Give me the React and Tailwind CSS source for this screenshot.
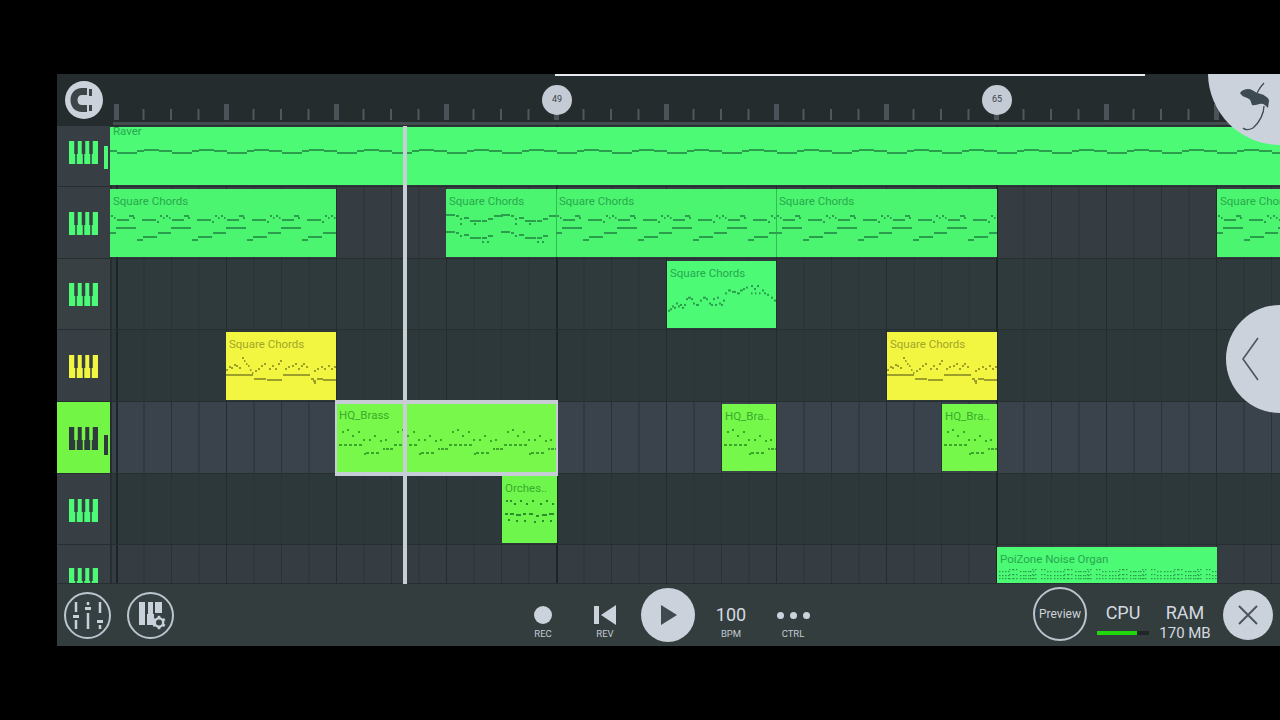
const FONT = "font-['Roboto','Liberation_Sans',sans-serif]";

function Piano({ color, bg, className = "" }) {
  return (
    <svg width="29" height="23" viewBox="0 0 29 23" className={className}>
      <rect x="0" y="0" width="29" height="23" fill={color} />
      {[6.5, 14, 21.5].map((x) => (
        <g key={x}>
          <rect x={x - 1.25} y="0" width="3.5" height="13" fill={bg} />
          <rect x={x - 0.25} y="13" width="1.5" height="10" fill={bg} />
        </g>
      ))}
    </svg>
  );
}

function Notes({ notes, period, width, height, color, dy = 0 }) {
  const rects = [];
  if (period) {
    const count = Math.ceil(width / period) + 1;
    for (let i = 0; i < count; i++) {
      notes.forEach((n, j) => {
        rects.push(<rect key={i + "-" + j} x={n[0] + i * period} y={n[1] + dy} width={n[2]} height={n[3] || 2} fill={color} />);
      });
    }
  } else {
    notes.forEach((n, j) => {
      rects.push(<rect key={j} x={n[0]} y={n[1] + dy} width={n[2]} height={n[3] || 2} fill={color} />);
    });
  }
  return (
    <svg width={width} height={height} className="absolute left-0 top-0 pointer-events-none">
      {rects}
    </svg>
  );
}

const chordA = [
  [1, 26, 2], [4, 28, 1.5], [19, 26, 5], [7, 30, 12], [32, 30, 14], [23, 28, 2], [47, 32, 2], [50, 26, 2], [53, 28, 1.5],
  [6, 38, 20], [0, 43, 6], [48, 43, 7], [27, 50, 6], [33, 47, 14],
];
const chordB = [
  [0, 25, 9], [10, 26, 3], [14, 29, 2], [18, 28, 5], [24, 31, 11], [36, 31, 5], [42, 29, 5], [48, 26, 9],
  [0, 42, 9], [10, 43, 3], [14, 46, 2], [18, 45, 5], [24, 48, 11], [36, 48, 5], [42, 46, 5], [36, 52, 2], [41, 52, 2], [14, 34, 2], [28, 34, 2],
];
const raver = [
  [0, 23, 7], [7, 25, 20], [27, 23, 7], [34, 22, 15], [49, 23, 6],
];
const climb = [
  [1, 46, 2], [3, 45, 2], [5, 43, 2], [7, 44, 2], [9, 41, 2], [11, 43, 2], [13, 42, 2], [15, 44, 2], [17, 42, 2], [19, 38, 2], [21, 37, 3], [24, 38, 2], [26, 41, 2], [29, 42, 3], [33, 39, 2], [36, 37, 3], [39, 38, 2], [42, 41, 2], [44, 42, 2], [46, 38, 2], [48, 42, 2], [50, 37, 2], [52, 41, 2], [54, 42, 2], [56, 39, 2], [58, 34, 2], [61, 32, 3], [65, 33, 4], [70, 34, 3], [73, 32, 3], [76, 31, 2], [79, 30, 2], [84, 29, 2], [87, 31, 2], [90, 29, 2], [95, 32, 2], [97, 34, 2], [100, 35, 2], [104, 37, 2], [107, 39, 2], [84, 34, 1.5], [88, 34, 1.5], [92, 34, 1.5],
].map(([x, y, w]) => [x, 27 + (y - 31) * 1.45, w]);
const yellow = [
  [0, 37, 2], [3, 34, 2], [5, 35, 2], [8, 32, 2], [10, 33, 2], [13, 35, 2], [16, 25, 2], [18, 28, 1.5], [20, 31, 1.5], [22, 33, 1.5], [24, 37, 1.5], [26, 40, 1.5], [29, 38, 2], [32, 36, 2], [35, 33, 2], [38, 31, 2], [43, 36, 2], [46, 33, 2], [49, 36, 2], [52, 31, 2], [54, 28, 2], [59, 36, 2], [62, 34, 2], [66, 33, 2], [69, 31, 2], [72, 36, 2], [75, 33, 2], [77, 31, 2], [80, 34, 2], [88, 38, 2], [91, 36, 2], [95, 34, 2], [98, 36, 2], [102, 33, 2], [105, 36, 2], [108, 34, 2],
  [0, 42, 27], [28, 46, 12], [41, 47, 15], [57, 42, 27], [85, 46, 3], [87, 48, 3], [88, 50, 2], [91, 46, 6], [97, 47, 13],
];
const brass = [
  [5, 27, 2], [10, 25, 2], [15, 31, 2], [21, 27, 2], [26, 35, 2], [32, 35, 2], [37, 31, 2], [43, 36, 2], [48, 35, 2],
  [2, 40, 3], [7, 40, 3], [12, 40, 3], [17, 40, 3], [22, 40, 3], [27, 49, 2], [29, 48, 3], [34, 48, 3], [39, 48, 3], [46, 44, 2], [49, 44, 3], [53, 44, 3],
];
const orches = [
  [4, 24, 2], [8, 24, 2], [12, 27, 2], [18, 24, 2], [24, 27, 2], [30, 24, 2], [38, 27, 2], [44, 24, 2], [50, 27, 2],
  [3, 37, 3], [8, 37, 4], [14, 38, 5], [21, 37, 3], [27, 37, 4], [34, 39, 3], [40, 38, 5], [47, 37, 5],
  [6, 43, 2], [14, 44, 2], [22, 44, 2], [32, 45, 2], [40, 44, 2], [48, 44, 2],
];
const organ = (() => {
  const out = [];
  for (let p = 0; p < 4; p++) {
    const o = p * 55;
    [[2, 2], [8, 2], [12, 0], [16, 0], [23, 2], [28, 2], [33, 2], [35, 0], [44, 0], [50, 2]].forEach(([x, y]) => {
      out.push([o + x, 22 + y, 1.5, 1.2], [o + x + 3, 22 + y, 1.5, 1.2], [o + x, 27 + y / 2, 1.5, 1.2], [o + x + 3, 27 + y / 2, 1.5, 1.2], [o + x, 31, 1.5, 1.2], [o + x + 3, 31, 1.5, 1.2]);
    });
  }
  return out;
})();

const G = "#4dfa76";
const G2 = "#4cf56f";
const LG = "#75f84a";
const Y = "#f2f640";

const tracks = [
  {
    h: "h-[61px]", bg: "bg-[#2f393c]", head: "bg-[#373f44]", top: 126, pt: 15, piano: G, mute: G, muteTop: 20, muteH: 23,
    clips: [{ x: 110, w: 1170, y: 127, h: 58, color: G, label: "Raver", notes: raver, period: 55, raver: true }],
  },
  {
    h: "h-[72px]", bg: "bg-[#353d42]", head: "bg-[#373f44]", top: 187, pt: 25, piano: G,
    clips: [
      { x: 110, w: 226, y: 189, h: 68, color: G2, label: "Square Chords", notes: chordA, period: 55 },
      { x: 446, w: 110, y: 189, h: 68, color: G2, label: "Square Chords", notes: chordB, period: 55 },
      { x: 556, w: 220, y: 189, h: 68, color: G2, label: "Square Chords", notes: chordA, period: 55, line: true },
      { x: 776, w: 221, y: 189, h: 68, color: G2, label: "Square Chords", notes: chordA, period: 55, line: true },
      { x: 1217, w: 63, y: 189, h: 68, color: G2, label: "Square Chords", notes: chordA, period: 55 },
    ],
  },
  {
    h: "h-[71px]", bg: "bg-[#2f3a3d]", head: "bg-[#384044]", top: 259, pt: 24, piano: G,
    clips: [{ x: 667, w: 109, y: 261, h: 67, color: G, label: "Square Chords", notes: climb }],
  },
  {
    h: "h-[72px]", bg: "bg-[#2d383a]", head: "bg-[#373f44]", top: 330, pt: 25, piano: Y,
    clips: [
      { x: 226, w: 110, y: 332, h: 68, color: Y, label: "Square Chords", lc: "#a3a52a", notes: yellow, nc: "#9c9f2a" },
      { x: 887, w: 110, y: 332, h: 68, color: Y, label: "Square Chords", lc: "#a3a52a", notes: yellow, nc: "#9c9f2a" },
    ],
  },
  {
    h: "h-[72px]", bg: "bg-[#3a424b]", head: "bg-[#73f545]", top: 402, pt: 25, piano: "#2f3a3c", pianoBg: "#73f545", mute: "#2f3a3c", muteTop: 33, muteH: 20,
    clips: [
      { x: 722, w: 54, y: 404, h: 67, color: LG, label: "HQ_Bra..", lc: "#3aab2c", notes: brass, period: 55, nc: "#39a52b" },
      { x: 942, w: 55, y: 404, h: 67, color: LG, label: "HQ_Bra..", lc: "#3aab2c", notes: brass, period: 55, nc: "#39a52b" },
    ],
  },
  {
    h: "h-[71px]", bg: "bg-[#2d383a]", head: "bg-[#373f44]", top: 474, pt: 25, piano: G,
    clips: [{ x: 502, w: 55, y: 476, h: 67, color: "#6ef64c", label: "Orches..", lc: "#3aab2c", notes: orches, nc: "#2a8f2a" }],
  },
  {
    h: "h-[39px]", bg: "bg-[#353d42]", head: "bg-[#373f44]", top: 545, pt: 23, piano: G,
    clips: [{ x: 997, w: 220, y: 547, h: 37, color: G, label: "PoiZone Noise Organ", notes: organ, nc: "#2a9e4c" }],
  },
];

function Clip({ c, top }) {
  return (
    <div
      className="absolute overflow-hidden"
      style={{ left: c.x - 110, top: c.y - top, width: c.w, height: c.h, background: c.color }}
    >
      {c.line && <div className="absolute left-0 top-0 bottom-0 w-px bg-[#38b85c]" />}
      <Notes notes={c.notes} period={c.period} width={c.w} height={c.h} color={c.nc || "#2a9e4c"} />
      <div
        className={"relative pl-[3px] text-[11.5px] leading-[14px] whitespace-nowrap " + (c.raver ? "-mt-[3px]" : "mt-[5px]")}
        style={{ color: c.lc || "#27a84e" }}
      >
        {c.label}
      </div>
    </div>
  );
}

function Track({ t }) {
  return (
    <div className={"flex overflow-hidden border-b border-[#262e30] " + t.h}>
      <div className={"relative w-[53px] shrink-0 pl-[12px] " + t.head}>
        <div style={{ paddingTop: t.pt }}>
          <Piano color={t.piano} bg={t.pianoBg || "#373f44"} />
        </div>
        {t.mute && (
          <div
            className="absolute left-[47px] w-[4px]"
            style={{ background: t.mute, top: t.muteTop, height: t.muteH }}
          />
        )}
      </div>
      <div
        className={
          "relative flex-1 [background-image:linear-gradient(to_right,#1d2426_2px,transparent_2px),linear-gradient(to_right,#252c2e_1px,transparent_1px),linear-gradient(to_right,#2a3234_1px,transparent_1px)] [background-size:440px_100%,110px_100%,27.5px_100%] [background-position:6px_0,6px_0,6px_0] " +
          t.bg
        }
      >
        <div className="absolute bottom-0 left-0 top-0 w-[2px] bg-[#262e30]" />
        {t.clips.map((c, i) => (
          <Clip key={i} c={c} top={t.top} />
        ))}
      </div>
    </div>
  );
}

function Ruler() {
  const ticks = [];
  for (let i = 0; i < 42; i++) {
    const x = 6 + i * 27.5;
    const major = i % 4 === 0;
    ticks.push(<rect key={i} x={major ? x - 2 : x - 1} y={major ? 30 : 35} width={major ? 5 : 2} height={major ? 16 : 11} fill={major ? "#4a5357" : "#4f585b"} />);
  }
  return (
    <svg width="1170" height="52" className="block">
      {ticks}
      <rect x="3" y="48" width="1167" height="3" fill="#434c4f" />
    </svg>
  );
}

function Marker({ x, n }) {
  return (
    <div
      className="absolute top-[11px] flex h-[30px] w-[30px] items-center justify-center rounded-full bg-[#c4cbd5] text-[9px] text-[#3a4246]"
      style={{ left: x - 15 - 57 }}
    >
      {n}
    </div>
  );
}

function Magnet() {
  return (
    <div className="flex h-[38px] w-[38px] items-center justify-center rounded-full bg-[#ccd2dc]">
      <svg width="28" height="28" viewBox="0 0 28 28">
        <path d="M17 2 H12 C5 2 0.5 7 0.5 14 C0.5 21 5 26 12 26 H17 V19 H12 C9 19 7.5 17 7.5 14 C7.5 11 9 9 12 9 H17 Z" fill="#3d4549" />
        <rect x="19" y="3" width="3" height="7" fill="#3d4549" />
        <rect x="19" y="19" width="3" height="6" fill="#3d4549" />
      </svg>
    </div>
  );
}

function RingButton({ children, size = "h-[47px] w-[47px]" }) {
  return (
    <div className={"flex shrink-0 items-center justify-center rounded-full border-2 border-[#bcc4ce] bg-[#354043] " + size}>
      {children}
    </div>
  );
}

function MixerIcon() {
  const c = "#c8d0da";
  return (
    <svg width="36" height="32" viewBox="0 0 36 32">
      <rect x="4.75" y="3" width="2.5" height="10" fill={c} />
      <rect x="3" y="16" width="6" height="3" fill={c} />
      <rect x="4.75" y="21" width="2.5" height="9" fill={c} />
      <rect x="16.75" y="3" width="2.5" height="3" fill={c} />
      <rect x="15" y="8" width="6" height="3" fill={c} />
      <rect x="16.75" y="14" width="2.5" height="16" fill={c} />
      <rect x="28.75" y="3" width="2.5" height="11" fill={c} />
      <rect x="27" y="21" width="6" height="3" fill={c} />
      <rect x="28.75" y="26" width="2.5" height="4" fill={c} />
    </svg>
  );
}

function PianoGear() {
  const c = "#c8d0da";
  return (
    <svg width="30" height="30" viewBox="0 0 30 30">
      <rect x="3" y="2" width="6" height="23" fill={c} />
      <rect x="12" y="2" width="5" height="12" fill={c} />
      <rect x="11" y="14" width="7" height="11" fill={c} />
      <rect x="19" y="2" width="7" height="11" fill={c} />
      <circle cx="23" cy="22.5" r="4.2" fill="none" stroke={c} strokeWidth="2.4" />
      {[0, 60, 120, 180, 240, 300].map((a) => (
        <rect key={a} x="21.7" y="15.8" width="2.6" height="2.4" fill={c} transform={`rotate(${a} 23 22.5)`} />
      ))}
    </svg>
  );
}

function Labeled({ w, label, children }) {
  return (
    <div className="flex shrink-0 flex-col items-center" style={{ width: w }}>
      <div className="flex h-[26px] items-center justify-center">{children}</div>
      <div className="text-[9.5px] leading-[12px] text-[#c3cad3]">{label}</div>
    </div>
  );
}

function BottomBar() {
  return (
    <div className="flex h-[62px] shrink-0 items-center bg-[#333d3e] pl-[7px] text-[#d0d6de]">
      <RingButton><MixerIcon /></RingButton>
      <div className="ml-[16px]">
        <RingButton><PianoGear /></RingButton>
      </div>
      <div className="ml-[338px] flex items-center pt-[12px]">
        <Labeled w={62} label="REC">
          <div className="h-[18px] w-[18px] rounded-full bg-[#cbd2dc]" />
        </Labeled>
        <Labeled w={62} label="REV">
          <svg width="24" height="20" viewBox="0 0 24 20">
            <rect x="1" y="1" width="5" height="18" fill="#cbd2dc" />
            <path d="M23 0 V20 L8 10 Z" fill="#cbd2dc" />
          </svg>
        </Labeled>
      </div>
      <div className="ml-[5px] flex h-[54px] w-[54px] shrink-0 items-center justify-center rounded-full bg-[#cbd2dc]">
        <svg width="20" height="22" viewBox="0 0 20 22" className="ml-[2px]">
          <path d="M2 1 L18 11 L2 21 Z" fill="#3f494e" />
        </svg>
      </div>
      <div className="ml-[5px] flex items-center pt-[12px]">
        <Labeled w={62} label="BPM">
          <span className="text-[18px] leading-[26px] text-[#d4d9e0]">100</span>
        </Labeled>
        <Labeled w={62} label="CTRL">
          <div className="flex gap-[6px]">
            <div className="h-[7px] w-[7px] rounded-full bg-[#cbd2dc]" />
            <div className="h-[7px] w-[7px] rounded-full bg-[#cbd2dc]" />
            <div className="h-[7px] w-[7px] rounded-full bg-[#cbd2dc]" />
          </div>
        </Labeled>
      </div>
      <div className="ml-[209px] flex h-[54px] w-[54px] shrink-0 items-center justify-center rounded-full border-2 border-[#bcc4ce] text-[12px] text-[#cdd3db] -mt-[2px]">
        Preview
      </div>
      <div className="ml-[7px] flex w-[58px] shrink-0 flex-col items-center pt-[7px]">
        <div className="text-[18px] leading-[22px] text-[#d4d9e0]">CPU</div>
        <div className="mt-[7px] h-[4px] w-[52px] bg-[#1f2729]">
          <div className="h-full w-[40px] bg-[#22d60e]" />
        </div>
      </div>
      <div className="ml-[3px] flex w-[60px] shrink-0 flex-col items-center pt-[14px]">
        <div className="text-[18px] leading-[22px] text-[#d4d9e0]">RAM</div>
        <div className="text-[15px] leading-[18px] text-[#d4d9e0]">170 MB</div>
      </div>
      <div className="ml-[8px] flex h-[50px] w-[50px] shrink-0 items-center justify-center rounded-full bg-[#cbd2dc]">
        <svg width="22" height="22" viewBox="0 0 22 22">
          <path d="M2 2 L20 20 M20 2 L2 20" stroke="#4a5560" strokeWidth="2" fill="none" />
        </svg>
      </div>
    </div>
  );
}

export default function App() {
  return (
    <div className={"h-[720px] w-[1280px] overflow-hidden bg-black pb-[74px] pl-[57px] pt-[74px] " + FONT}>
      <div className="relative flex h-full flex-col overflow-hidden">
        <div className="flex h-[52px] shrink-0 bg-[#252c2e]">
          <div className="flex w-[53px] shrink-0 items-center justify-center pl-[1px]">
            <Magnet />
          </div>
          <Ruler />
        </div>
        {tracks.map((t, i) => (
          <Track key={i} t={t} />
        ))}
        <BottomBar />

        {/* overlays */}
        <div className="absolute left-[278px] top-[326px] h-[76px] w-[223px] overflow-hidden border-x-2 border-y-4 border-[#c6cdd6] bg-[#78f84a]">
          <Notes notes={brass} period={55} width={219} height={68} color="#39a52b" />
          <div className="relative mt-[4px] pl-[2px] text-[11.5px] leading-[14px] text-[#3aab2c]">HQ_Brass</div>
        </div>
        <div className="absolute left-[498px] top-0 h-[2px] w-[590px] bg-[#e8ecf0]" />
        <Marker x={557} n="49" />
        <Marker x={997} n="65" />
        <div className="absolute left-[346px] top-[52px] h-[458px] w-[4px] bg-[#c8ced6]" />
        <div className="absolute left-[1151px] top-[-73px] h-[144px] w-[144px] rounded-full bg-[#ccd2dc]" />
        <svg width="40" height="60" viewBox="0 0 40 60" className="absolute left-[1180px] top-[5px]">
          <path d="M3 14 C5 11 8 10 11 10 C14 10 17 12 20 14 C23 15 26 15 28 17 C31 19 32 20 32 22 L31 29 C28 26 26 24 23 25 C20 25 18 27 15 26 C14 24 14 21 12 20 C9 18 5 18 3 14 Z" fill="#3d4a52" />
          <path d="M27 4 C24 7 22 10 20 14" stroke="#3d4a52" strokeWidth="1.3" fill="none" />
          <path d="M27 27 C27 34 23 43 16 49 C12 51 8 51 6 49" stroke="#3d4a52" strokeWidth="1.3" fill="none" />
        </svg>
        <div className="absolute left-[1169px] top-[231px] flex h-[108px] w-[108px] items-center rounded-full bg-[#ccd2dc]">
          <svg width="20" height="46" viewBox="0 0 20 46" className="ml-[15px]">
            <path d="M17 2 L2 23 L17 44" stroke="#4a5560" strokeWidth="1.6" fill="none" />
          </svg>
        </div>
      </div>
    </div>
  );
}
